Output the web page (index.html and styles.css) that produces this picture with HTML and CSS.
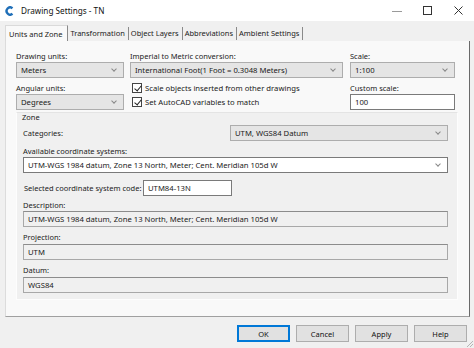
FILE: index.html
```html
<!DOCTYPE html>
<html lang="en">
<head>
  <meta charset="UTF-8" />
  <title>Drawing Settings - TN</title>
  <link rel="stylesheet" href="styles.css">
</head>
<body>

<div class="window">
  <div class="titlebar">
    <svg class="app-icon" width="9" height="10" viewBox="0 0 9 10">
      <path d="M7.5 2.2 A3.6 3.6 0 1 0 7.5 7.8" fill="none" stroke="#1f6fb8" stroke-width="2.4"/>
    </svg>
    <span class="title">Drawing Settings - TN</span>
    <div class="win-controls">
      <span class="ctl"><svg width="10" height="10" viewBox="0 0 10 10"><path d="M0 5.5h10" stroke="#9a9a9a" stroke-width="1"/></svg></span>
      <span class="ctl"><svg width="10" height="10" viewBox="0 0 10 10"><rect x="0.5" y="0.5" width="8" height="8" fill="none" stroke="#333" stroke-width="1"/></svg></span>
      <span class="ctl"><svg width="10" height="10" viewBox="0 0 10 10"><path d="M0.5 0.5l8 8M8.5 0.5l-8 8" stroke="#333" stroke-width="1"/></svg></span>
    </div>
  </div>

  <div class="tabs">
    <div class="tab active">Units and Zone</div>
    <div class="tab">Transformation</div>
    <div class="tab">Object Layers</div>
    <div class="tab">Abbreviations</div>
    <div class="tab">Ambient Settings</div>
  </div>

  <div class="panel">
    <div class="top-grid">
      <div class="col col-1">
        <div class="lbl">Drawing units:</div>
        <div class="select">Meters</div>
        <div class="lbl gap">Angular units:</div>
        <div class="select">Degrees</div>
      </div>
      <div class="col col-2">
        <div class="lbl">Imperial to Metric conversion:</div>
        <div class="select">International Foot(1 Foot = 0.3048 Meters)</div>
        <label class="check"><span class="box"></span>Scale objects inserted from other drawings</label>
        <label class="check"><span class="box"></span>Set AutoCAD variables to match</label>
      </div>
      <div class="col col-3">
        <div class="lbl">Scale:</div>
        <div class="select">1:100</div>
        <div class="lbl gap">Custom scale:</div>
        <div class="input">100</div>
      </div>
    </div>

    <div class="group">
      <div class="legend">Zone</div>
      <div class="cat-row">
        <div class="lbl">Categories:</div>
        <div class="select cat">UTM, WGS84 Datum</div>
      </div>
      <div class="lbl gap">Available coordinate systems:</div>
      <div class="select white">UTM-WGS 1984 datum, Zone 13 North, Meter; Cent. Meridian 105d W</div>
      <div class="code-row">
        <div class="lbl">Selected coordinate system code:</div>
        <div class="input code">UTM84-13N</div>
      </div>
      <div class="lbl gap-s">Description:</div>
      <div class="readonly">UTM-WGS 1984 datum, Zone 13 North, Meter; Cent. Meridian 105d W</div>
      <div class="lbl gap-r">Projection:</div>
      <div class="readonly">UTM</div>
      <div class="lbl gap-r">Datum:</div>
      <div class="readonly">WGS84</div>
    </div>
  </div>

  <div class="buttons">
    <button class="btn default">OK</button>
    <button class="btn">Cancel</button>
    <button class="btn">Apply</button>
    <button class="btn">Help</button>
    <svg class="grip" width="8" height="8" viewBox="0 0 8 8">
      <path d="M7 1L1 7M7 4L4 7" stroke="#b5b5b5" stroke-width="1"/>
    </svg>
  </div>
</div>

</body>
</html>
```

FILE: styles.css
```css
/* --- base --- */
* {
  box-sizing: border-box;
  margin: 0;
  padding: 0;
}

body {
  width: 474px;
  height: 348px;
  overflow: hidden;
  font-family: "Noto Sans", "Liberation Sans", sans-serif;
  font-size: 7.5px;
  color: #1a1a1a;
  background: #f0f0f0;
}

.window {
  position: relative;
  height: 348px;
}

/* --- title bar --- */
.titlebar {
  height: 21px;
  background: #fff;
  display: flex;
  align-items: center;
  padding-left: 5px;
}
.app-icon {
  margin-right: 7px;
}
.title {
  font-size: 8.2px;
  color: #111;
}
.win-controls {
  margin-left: auto;
  display: flex;
  height: 100%;
}
.ctl {
  width: 31px;
  display: flex;
  align-items: center;
  justify-content: center;
}

/* --- tabs --- */
.tabs {
  display: flex;
  height: 20px;
  padding: 4px 0 0 5px;
}
.tab {
  border-right: 1px solid #8a8a8a;
  margin: 2px 0 0;
  height: 13px;
  line-height: 13px;
  padding: 0 3px 0 2px;
}
.tab.active {
  margin: 0;
  height: 16px;
  line-height: 17px;
  padding: 0 5px 0 3px;
  background: #f9f9f9;
  border: 1px solid #dadada;
  border-bottom: none;
  border-right: 1px solid #8a8a8a;
}

/* --- panel --- */
.panel {
  margin: 0 4px 0 5px;
  height: 276px;
  background: #f9f9f9;
  border-left: 1px solid #dcdcdc;
  border-right: 1px solid #6a6a6a;
  border-bottom: 1px solid #a0a0a0;
  padding: 10px 11px 0 10px;
}

.top-grid {
  display: grid;
  grid-template-columns: 108px 213px 106px;
  column-gap: 6px;
}
.col-3 {
  margin-left: 1px;
}

.lbl {
  height: 10px;
  line-height: 10px;
  margin-bottom: 1px;
  color: #222;
  white-space: nowrap;
}
.lbl.gap { margin-top: 5px; }
.lbl.gap-s { margin-top: 4px; }
.lbl.gap-r { margin-top: 5px; margin-bottom: 2px; }

.select,
.input,
.readonly {
  height: 16px;
  line-height: 14px;
  padding-left: 4px;
  font-size: 7.7px;
  border: 1px solid #adadad;
  background: #e5e5e5;
  white-space: nowrap;
  overflow: hidden;
  position: relative;
}
.select::after {
  content: '';
  position: absolute;
  right: 7px;
  top: 4px;
  width: 3px;
  height: 3px;
  border-right: 1px solid #888;
  border-bottom: 1px solid #888;
  transform: rotate(45deg);
}
.select.white,
.input {
  background: #fff;
  border-color: #7a7a7a;
}
.readonly {
  background: #f0f0f0;
  border-color: #a8a8a8;
  border-top-color: #8c8c8c;
}

.check {
  display: flex;
  align-items: center;
  height: 14px;
  margin-left: 2px;
  font-size: 7.7px;
  white-space: nowrap;
}
.check:first-of-type {
  margin-top: 3px;
}
.box {
  width: 10px;
  height: 10px;
  border: 1px solid #444;
  background: #fff;
  margin-right: 3px;
  position: relative;
  flex: none;
}
.box::after {
  content: '';
  position: absolute;
  left: 2.5px;
  top: 0;
  width: 3px;
  height: 6px;
  border-right: 1px solid #222;
  border-bottom: 1px solid #222;
  transform: rotate(40deg);
}

/* --- zone group --- */
.group {
  margin-top: 2px;
  height: 188px;
  background: #f0f0f0;
  border: 1px solid #fdfdfd;
  border-top-color: #e4e4e4;
  padding: 0 9px 0 6px;
}
.legend {
  height: 10px;
  line-height: 9px;
  margin-left: -1px;
  margin-bottom: 2px;
}
.cat-row {
  display: flex;
  justify-content: space-between;
  align-items: center;
}
.cat-row .lbl {
  margin: 0;
}
.select.cat {
  width: 218px;
}
.code-row {
  display: flex;
  align-items: center;
  margin-top: 7px;
  margin-left: 1px;
}
.code-row .lbl {
  width: 119px;
  margin: 0;
}
.input.code {
  width: 89px;
}

/* --- buttons --- */
.buttons {
  display: flex;
  justify-content: flex-end;
  gap: 6px;
  padding: 8px 7px 0 0;
}
.btn {
  width: 53px;
  height: 17px;
  font-family: inherit;
  font-size: 7.5px;
  color: #111;
  background: #e1e1e1;
  border: 1px solid #adadad;
}
.btn.default {
  border: 1px solid #0078d7;
  box-shadow: inset 0 0 0 1px #0078d7;
}
.grip {
  position: absolute;
  right: 0;
  bottom: 0;
}
```
